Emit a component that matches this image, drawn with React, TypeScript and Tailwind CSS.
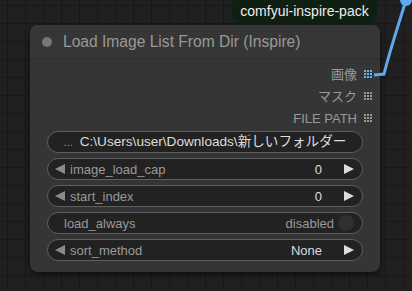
import React from "react";

const font = { fontFamily: '"Liberation Sans", Arial, "Noto Sans CJK JP", sans-serif' };

function Slot({ color }: { color: string }) {
  return (
    <svg width="9" height="9" viewBox="0 0 9 9" className="shrink-0">
      {[0, 3, 6].map((y) =>
        [0, 3, 6].map((x) => (
          <rect key={`${x}-${y}`} x={x} y={y} width="2" height="2" fill={color} />
        ))
      )}
    </svg>
  );
}

function LeftArrow() {
  return (
    <svg width="12" height="12" viewBox="0 0 12 12" className="shrink-0">
      <polygon points="11,1 11,11 1,6" fill="#8a8a8a" />
    </svg>
  );
}

function RightArrow() {
  return (
    <svg width="12" height="12" viewBox="0 0 12 12" className="shrink-0">
      <polygon points="1,1 1,11 11,6" fill="#dddddd" />
    </svg>
  );
}

function NumberWidget({ label, value }: { label: string; value: string }) {
  return (
    <div className="h-[22px] rounded-full border border-[#5e5e5e] bg-[#222222] flex items-center pl-[6px] pr-[7px]">
      <LeftArrow />
      <span className="ml-[4px] text-[13px] text-[#999999] leading-none">{label}</span>
      <span className="ml-auto text-[13px] text-[#dddddd] leading-none">{value}</span>
      <span className="ml-[21px] flex">
        <RightArrow />
      </span>
    </div>
  );
}

export default function App() {
  return (
    <div
      className="relative w-[412px] h-[291px] overflow-hidden bg-[#202020] bg-[linear-gradient(to_right,#181818_1px,transparent_1px),linear-gradient(to_bottom,#181818_1px,transparent_1px)] bg-[size:18px_18px] bg-[position:7px_5px]"
      style={font}
    >
      {/* node */}
      <div className="absolute left-[30px] top-[25px] w-[350px] rounded-[8px] bg-[#353535] shadow-[0_2px_6px_rgba(0,0,0,0.6)]">
        <div className="h-[34px] flex items-center pl-[12px] rounded-t-[8px] bg-[#363636] border-b border-[#2d2d2d]">
          <div className="w-[10px] h-[10px] rounded-full bg-[#777777]" />
          <span className="ml-[11px] text-[15.6px] text-[#999999] leading-none">
            Load Image List From Dir (Inspire)
          </span>
        </div>
        <div className="pt-[4px] pb-[11px]">
          <div className="flex flex-col pr-[7px]">
            {[
              { t: "画像", c: "#64b5f6" },
              { t: "マスク", c: "#9a9a9a" },
              { t: "FILE PATH", c: "#9a9a9a" },
            ].map((o) => (
              <div key={o.t} className="h-[22px] flex items-center justify-end gap-[7px]">
                <span className="text-[13px] text-[#999999] leading-none">{o.t}</span>
                <Slot color={o.c} />
              </div>
            ))}
          </div>
          <div className="mt-[2px] px-[17px] flex flex-col gap-[5px]">
            <div className="h-[22px] rounded-full border border-[#5e5e5e] bg-[#222222] flex items-center justify-center gap-[7px]">
              <span className="text-[11px] text-[#999999] leading-none">...</span>
              <span className="text-[13.6px] text-[#dddddd] leading-none">
                C:\Users\user\Downloads\新しいフォルダー
              </span>
            </div>
            <NumberWidget label="image_load_cap" value="0" />
            <NumberWidget label="start_index" value="0" />
            <div className="h-[22px] rounded-full border border-[#5e5e5e] bg-[#222222] flex items-center pl-[16px] pr-[8px]">
              <span className="text-[13px] text-[#999999] leading-none">load_always</span>
              <span className="ml-auto text-[13px] text-[#999999] leading-none">disabled</span>
              <span className="ml-[4px] w-[16px] h-[16px] rounded-full bg-[#303030]" />
            </div>
            <NumberWidget label="sort_method" value="None" />
          </div>
        </div>
      </div>

      {/* badge */}
      <div className="absolute left-[232px] top-[-6px] h-[29px] w-[145px] rounded-[8px] bg-[#0f1f12] flex items-end justify-center pb-[5px]">
        <span className="text-[14px] text-[#eeeeee] leading-none">comfyui-inspire-pack</span>
      </div>

      {/* link */}
      <svg className="absolute left-0 top-0" width="412" height="291" viewBox="0 0 412 291">
        <path d="M374 75 L384 74 C390 50 400 20 406 0" stroke="#5fa8ee" strokeWidth="3" fill="none" />
        <circle cx="406" cy="0" r="6" fill="#5fa8ee" />
      </svg>
    </div>
  );
}
